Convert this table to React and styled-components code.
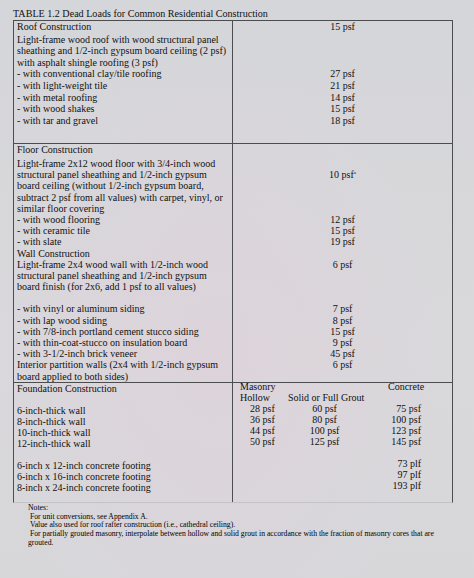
import styled, { createGlobalStyle } from "styled-components";

const GlobalStyle = createGlobalStyle`
  html, body {
    margin: 0;
    padding: 0;
    background: #d6d6d9;
  }
  * {
    box-sizing: border-box;
  }
`;

const roofLines = [
  ["Roof Construction", "15 psf"],
  ["Light-frame wood roof with wood structural panel", ""],
  ["sheathing and 1/2-inch gypsum board ceiling (2 psf)", ""],
  ["with asphalt shingle roofing (3 psf)", ""],
  ["- with conventional clay/tile roofing", "27 psf"],
  ["- with light-weight tile", "21 psf"],
  ["- with metal roofing", "14 psf"],
  ["- with wood shakes", "15 psf"],
  ["- with tar and gravel", "18 psf"],
];

const floorLines = [
  ["Floor Construction", ""],
  ["Light-frame 2x12 wood floor with 3/4-inch wood", ""],
  ["structural panel sheathing and 1/2-inch gypsum", "10 psf", "a"],
  ["board ceiling (without 1/2-inch gypsum board,", ""],
  ["subtract 2 psf from all values) with carpet, vinyl, or", ""],
  ["similar floor covering", ""],
  ["- with wood flooring", "12 psf"],
  ["- with ceramic tile", "15 psf"],
  ["- with slate", "19 psf"],
  ["Wall Construction", ""],
  ["Light-frame 2x4 wood wall with 1/2-inch wood", "6 psf"],
  ["structural panel sheathing and 1/2-inch gypsum", ""],
  ["board finish (for 2x6, add 1 psf to all values)", ""],
  ["", ""],
  ["- with vinyl or aluminum siding", "7 psf"],
  ["- with lap wood siding", "8 psf"],
  ["- with 7/8-inch portland cement stucco siding", "15 psf"],
  ["- with thin-coat-stucco on insulation board", "9 psf"],
  ["- with 3-1/2-inch brick veneer", "45 psf"],
  ["Interior partition walls (2x4 with 1/2-inch gypsum", "6 psf"],
  ["board applied to both sides)", ""],
];

const foundationLines = [
  "Foundation Construction",
  "",
  "6-inch-thick wall",
  "8-inch-thick wall",
  "10-inch-thick wall",
  "12-inch-thick wall",
  "",
  "6-inch x 12-inch concrete footing",
  "6-inch x 16-inch concrete footing",
  "8-inch x 24-inch concrete footing",
];

// hollow, solid, concrete
const foundationValues = [
  ["28 psf", "60 psf", "75 psf"],
  ["36 psf", "80 psf", "100 psf"],
  ["44 psf", "100 psf", "123 psf"],
  ["50 psf", "125 psf", "145 psf"],
  ["", "", ""],
  ["", "", "73 plf"],
  ["", "", "97 plf"],
  ["", "", "193 plf"],
];

const notes = [
  ["Notes:", false],
  ["For unit conversions, see Appendix A.", true],
  ["Value also used for roof rafter construction (i.e., cathedral ceiling).", true],
  [
    "For partially grouted masonry, interpolate between hollow and solid grout in accordance with the fraction of masonry cores that are",
    true,
  ],
  ["grouted.", false],
];

function App() {
  return (
    <>
      <GlobalStyle />
      <Page>
        <Title>TABLE 1.2 Dead Loads for Common Residential Construction</Title>
        <Table>
          <Section $lh={11.6}>
            <LabelCell $padBottom={17}>
              {roofLines.map(([label], i) => (
                <Line key={i} $head={i === 0}>
                  {label}
                </Line>
              ))}
            </LabelCell>
            <ValueCell>
              {roofLines.map(([, value], i) => (
                <Line key={i} $head={i === 0}>
                  {value}
                </Line>
              ))}
            </ValueCell>
          </Section>

          <Section $lh={11.2}>
            <LabelCell>
              {floorLines.map(([label], i) => (
                <Line key={i} $head={i === 0} $headGap={2.5}>
                  {label}
                </Line>
              ))}
            </LabelCell>
            <ValueCell>
              {floorLines.map(([, value, note], i) => (
                <Line key={i} $head={i === 0} $headGap={2.5}>
                  {value}
                  {note && <Sup>{note}</Sup>}
                </Line>
              ))}
            </ValueCell>
          </Section>

          <Section $lh={11}>
            <LabelCell $padBottom={9}>
              {foundationLines.map((label, i) => (
                <Line key={i}>{label}</Line>
              ))}
            </LabelCell>
            <ValueCell>
              <FoundGrid>
                <HollowCell $head>Masonry</HollowCell>
                <SolidCell $head />
                <ConcreteCell $head>Concrete</ConcreteCell>
                <HollowCell $head>Hollow</HollowCell>
                <SolidCell $head>Solid or Full Grout</SolidCell>
                <ConcreteCell $head />
                {foundationValues.map(([h, s, c], i) => (
                  <Row key={i}>
                    <HollowCell>{h}</HollowCell>
                    <SolidCell>{s}</SolidCell>
                    <ConcreteCell>{c}</ConcreteCell>
                  </Row>
                ))}
              </FoundGrid>
            </ValueCell>
          </Section>
        </Table>

        <Notes>
          {notes.map(([text, indent], i) => (
            <NoteLine key={i} $indent={indent}>
              {text}
            </NoteLine>
          ))}
        </Notes>
      </Page>
    </>
  );
}

export default App;

const Page = styled.div`
  width: 474px;
  height: 578px;
  overflow: hidden;
  padding: 7px 0 0 13px;
  font-family: "Liberation Serif", "Times New Roman", serif;
  color: #111;
  background:
    radial-gradient(ellipse at 45% 62%, rgba(226, 206, 218, 0.45), rgba(226, 206, 218, 0) 60%),
    linear-gradient(to bottom, #d5d6da 0%, #d9d8db 60%, #d7d7da 100%);
`;

const Title = styled.div`
  font-size: 10.1px;
  line-height: 13px;
  height: 13px;
  white-space: nowrap;
`;

const Table = styled.div`
  width: 440px;
  border: 1px solid #4d4d4f;
  border-bottom-color: rgba(60, 60, 60, 0.12);
`;

const Section = styled.div`
  --lh: ${(p) => p.$lh}px;
  display: grid;
  grid-template-columns: 219px 1fr;
  font-size: 10px;

  & + & {
    border-top: 1px solid #4d4d4f;
  }
`;

const LabelCell = styled.div`
  border-right: 1px solid #4d4d4f;
  padding: 0 0 ${(p) => p.$padBottom || 0}px 3px;
`;

const ValueCell = styled.div`
  text-align: center;
`;

const Line = styled.div`
  height: var(--lh);
  line-height: var(--lh);
  white-space: nowrap;
  margin-bottom: ${(p) => (p.$head ? p.$headGap ?? 1 : 0)}px;
`;

const Sup = styled.sup`
  font-size: 5px;
  vertical-align: 4px;
  line-height: 0;
`;

const FoundGrid = styled.div`
  display: grid;
  grid-template-columns: 47px 89px 1fr;
  grid-auto-rows: var(--lh);
  margin-top: -2px;
  line-height: var(--lh);
  white-space: nowrap;
`;

const Row = styled.div`
  display: contents;
`;

const HollowCell = styled.div`
  text-align: left;
  padding-left: ${(p) => (p.$head ? 7 : 17)}px;
`;

const SolidCell = styled.div`
  text-align: ${(p) => (p.$head ? "left" : "center")};
  padding-left: ${(p) => (p.$head ? 8 : 0)}px;
`;

const ConcreteCell = styled.div`
  text-align: ${(p) => (p.$head ? "left" : "right")};
  padding-left: ${(p) => (p.$head ? 19 : 0)}px;
  padding-right: ${(p) => (p.$head ? 0 : 31)}px;
`;

const Notes = styled.div`
  margin-top: 1px;
  padding-left: 15px;
  font-size: 7.7px;
  line-height: 8.8px;
  color: #000;
`;

const NoteLine = styled.div`
  white-space: nowrap;
  padding-left: ${(p) => (p.$indent ? 2 : 0)}px;
`;
